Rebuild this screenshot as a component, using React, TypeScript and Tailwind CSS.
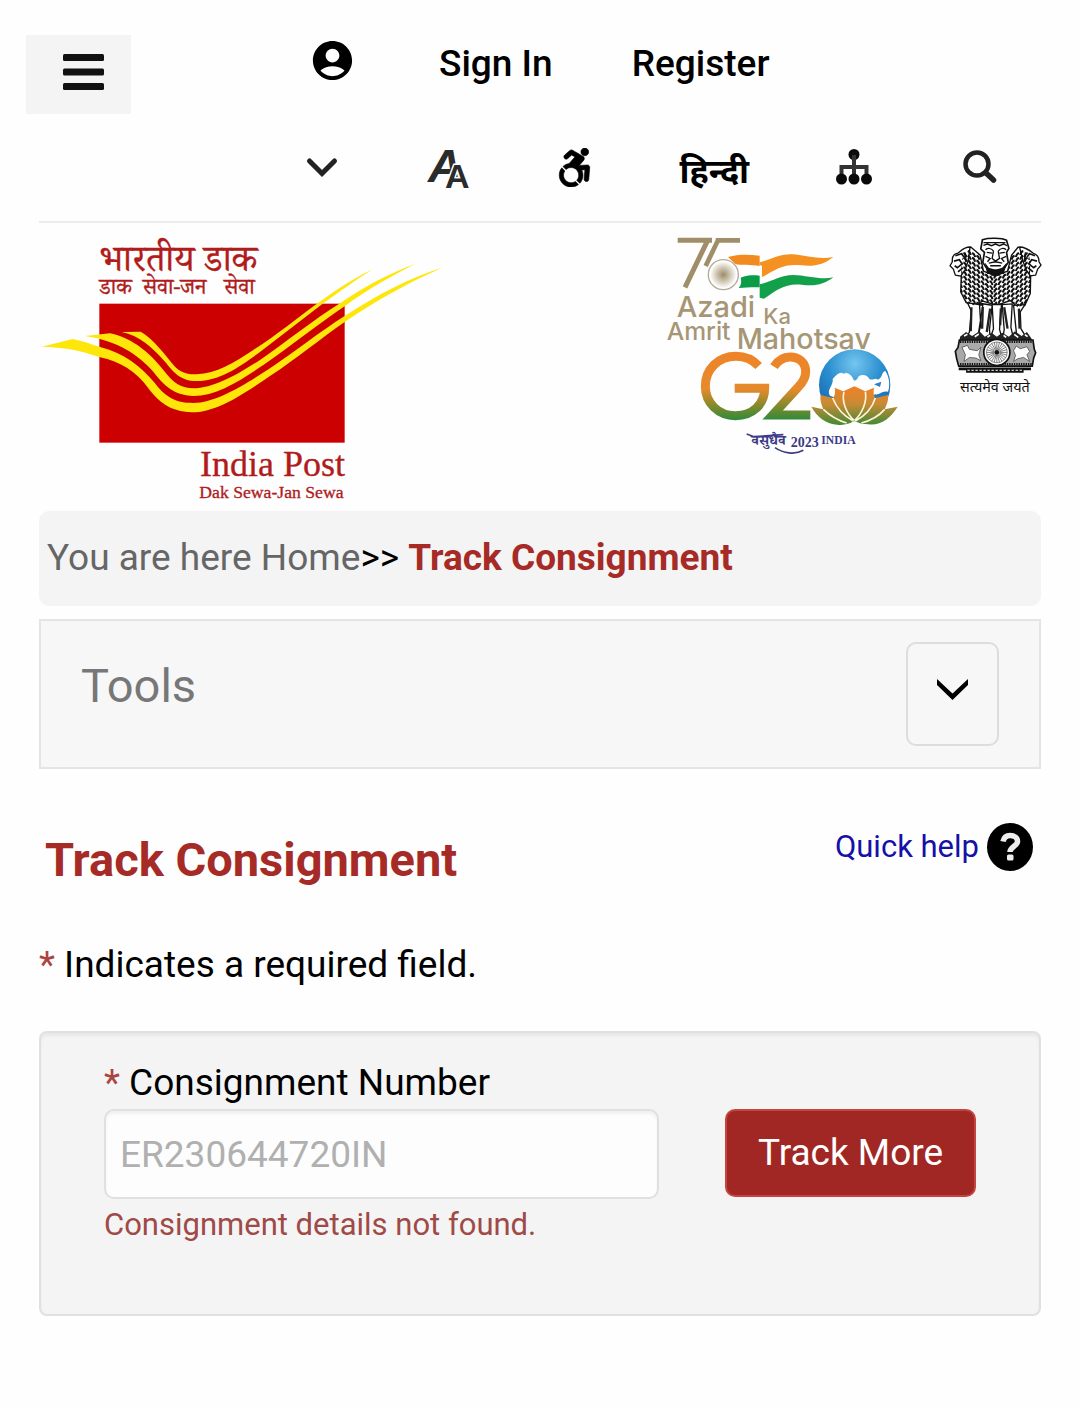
import React, { useState } from "react";
import { MdAccountCircle } from "react-icons/md";
import { FaAccessibleIcon } from "react-icons/fa6";

const HINDI_SERIF = "'Noto Serif Devanagari', 'Noto Sans Devanagari', 'Liberation Serif', serif";

function MenuIcon() {
  return (
    <svg viewBox="0 0 41 36" className="h-9 w-[41px]" fill="#111" aria-hidden="true">
      <rect x="0" y="0" width="41" height="7" rx="1.5" />
      <rect x="0" y="14.5" width="41" height="7" rx="1.5" />
      <rect x="0" y="29" width="41" height="7" rx="1.5" />
    </svg>
  );
}

function ChevronIcon() {
  return (
    <svg viewBox="0 0 42 42" className="size-[42px]" fill="none" stroke="#222" strokeWidth="5" strokeLinecap="round" aria-hidden="true">
      <path d="M8.5 15 L21 27.5 L33.5 15" />
    </svg>
  );
}

function TextSizeIcon() {
  return (
    <svg viewBox="0 0 42 42" className="size-[42px] overflow-visible" fill="#2b2b2b" fontWeight="700" aria-hidden="true">
      <text x="1" y="36" fontSize="47" fontStyle="italic" fontFamily="'Liberation Sans Narrow', 'Liberation Sans', sans-serif">A</text>
      <text x="18" y="42" fontSize="34" fontFamily="'Liberation Sans', sans-serif" stroke="#fefefe" strokeWidth="3" paintOrder="stroke">A</text>
    </svg>
  );
}

function SitemapIcon() {
  return (
    <svg viewBox="0 0 42 42" className="size-[42px]" fill="#0a0a0a" aria-hidden="true">
      <circle cx="21" cy="8.5" r="5.5" />
      <path d="M8.5 33V21H33.5V33M21 9V33" fill="none" stroke="#333" strokeWidth="4" />
      <circle cx="8.5" cy="33" r="5.5" />
      <circle cx="21" cy="33" r="5.5" />
      <circle cx="33.5" cy="33" r="5.5" />
    </svg>
  );
}

function SearchIcon() {
  return (
    <svg viewBox="0 0 42 42" className="size-[42px]" fill="none" stroke="#222" aria-hidden="true">
      <circle cx="18" cy="18" r="11.5" strokeWidth="4.5" />
      <path d="M27 27 L34.500 34" strokeWidth="5.500" strokeLinecap="round" />
    </svg>
  );
}

function IndiaPostLogo() {
  return (
    <svg viewBox="27 45 1212 789" className="h-auto w-[404px] overflow-visible" role="img" aria-label="India Post">
      <g fill="#b01c1c" fontFamily={HINDI_SERIF}>
        <text x="208" y="153" fontSize="109" stroke="#b01c1c" strokeWidth="1">भारतीय डाक</text>
        <g fontSize="66" stroke="#b01c1c" strokeWidth="1">
          <text x="208" y="222">डाक</text>
          <text x="338" y="222">सेवा-जन</text>
          <text x="582" y="222">सेवा</text>
        </g>
      </g>
      <rect x="208" y="251" width="736" height="417" fill="#cc0000" />
      <g fill="#ffe60a">
        <path d="M35 380 L128 357 C160 364 185 373 210 381 C280 398 335 440 375 490 C410 535 440 549 490 549 C560 549 650 490 720 445 C800 390 870 335 945 287 C1040 225 1140 172 1237 143 C1140 185 1040 240 945 305 C870 357 800 415 720 468 C640 522 560 577 485 577 C420 575 385 545 355 505 C320 455 270 424 210 412 C150 390 100 382 35 380Z" />
        <path d="M165 348 L240 340 C310 355 360 400 400 450 C430 490 455 505 490 505 C550 505 620 465 690 420 C770 365 850 300 930 250 C1010 195 1080 160 1155 132 C1080 170 1010 210 945 258 C860 315 780 380 700 435 C630 482 560 528 490 528 C430 525 400 495 370 455 C320 400 260 362 165 348Z" />
        <path d="M275 336 L332 335 C370 355 405 405 435 440 C455 460 475 463 500 463 C560 460 610 430 670 390 C740 345 800 295 865 248 C920 210 970 175 1028 148 C970 185 930 215 880 250 C815 300 750 350 685 400 C625 442 570 483 500 483 C450 483 430 455 405 425 C370 385 330 347 275 336Z" />
      </g>
      <g fill="#b01c1c" stroke="#b01c1c" strokeWidth="1" fontFamily="'Liberation Serif', serif">
        <text x="510" y="769" fontSize="108">India Post</text>
        <text x="508" y="833" fontSize="53">Dak Sewa-Jan Sewa</text>
      </g>
    </svg>
  );
}

function CampaignLogo() {
  return (
    <svg viewBox="51 36 693 657" className="h-auto w-[231px]" role="img" aria-label="Azadi Ka Amrit Mahotsav, G20 2023 India">
      <defs>
        <linearGradient id="g20" x1="0" y1="380" x2="0" y2="585" gradientUnits="userSpaceOnUse">
          <stop offset="0" stopColor="#ee8427" />
          <stop offset="0.55" stopColor="#e68a2c" />
          <stop offset="0.8" stopColor="#7f8a2c" />
          <stop offset="1" stopColor="#2f8a3c" />
        </linearGradient>
        <linearGradient id="lotus" x1="0" y1="485" x2="0" y2="600" gradientUnits="userSpaceOnUse">
          <stop offset="0" stopColor="#f08127" />
          <stop offset="0.45" stopColor="#c98a35" />
          <stop offset="1" stopColor="#3f8a35" />
        </linearGradient>
        <radialGradient id="globe" cx="0.5" cy="0.2" r="0.75">
          <stop offset="0" stopColor="#74c6ee" />
          <stop offset="0.5" stopColor="#2b8fd0" />
          <stop offset="1" stopColor="#1467ae" />
        </radialGradient>
        <radialGradient id="wheel">
          <stop offset="0" stopColor="#9d8b68" />
          <stop offset="0.55" stopColor="#d3cab8" />
          <stop offset="1" stopColor="#fff" />
        </radialGradient>
      </defs>

      <g fill="none" stroke="#a08d6a">
        <path d="M83 46H186M173 46L105 187" strokeWidth="15" />
        <path d="M270 46H197M204 46L167 123" strokeWidth="14" />
        <circle cx="220" cy="149" r="45" stroke="#b5aa98" strokeWidth="4" />
      </g>
      <circle cx="220" cy="149" r="40" fill="url(#wheel)" />
      <path d="M234 96C270 86 300 90 329 92V123C302 118 272 122 256 117Z" fill="#f28a20" />
      <path d="M329 112C368 102 390 85 430 88C470 92 510 105 550 96C522 118 492 126 455 121C405 115 380 130 336 157V123L329 119Z" fill="#f59120" />
      <path d="M272 158C292 150 310 150 329 152V187C304 186 285 189 266 189C274 179 275 170 272 158Z" fill="#0b9c48" />
      <path d="M329 178C368 169 390 151 430 150C470 151 515 166 550 157C522 178 495 185 455 179C405 174 380 195 342 221L329 218Z" fill="#13a04b" />

      <g fill="#a69676" fontFamily="Inter, sans-serif" fontWeight="500">
        <text x="80" y="276" fontSize="87">Azadi</text>
        <text x="340" y="298" fontSize="66">Ka</text>
        <text x="50" y="346" fontSize="74">Amrit</text>
        <text x="260" y="371" fontSize="86">Mahotsav</text>
      </g>

      <g fill="none" stroke="url(#g20)" strokeWidth="27">
        <path d="M326 423C302 398 280 394 258 394C206 394 166 432 166 484C166 535 206 572 256 572C308 572 344 538 344 490H254" />
        <path d="M372 425C386 403 402 396 420 396C448 396 467 414 467 440C467 460 457 474 443 488L368 570H481" />
      </g>

      <circle cx="614" cy="480" r="107" fill="url(#globe)" />
      <path d="M540 512C528 495 552 480 548 462C560 448 572 438 580 446C592 440 602 448 608 458C612 472 620 468 626 454C638 446 652 450 658 462C668 468 674 456 684 464C700 456 694 440 706 438C716 452 722 480 714 500C694 496 690 510 676 508L650 520H560Z" fill="#fff" />
      <path d="M672 478L694 470L690 486Z" fill="#2b7fc4" />
      <path d="M484 545L520 553C512 533 510 522 512 510L548 519C556 512 556 500 554 488L580 499L613 484L646 499L672 488C670 500 670 512 676 519L714 510C716 524 712 536 704 553L743 545C722 580 690 603 655 598C638 598 625 594 613 588C600 596 580 602 562 599C530 598 503 578 484 545Z" fill="url(#lotus)" />
      <path d="M520 553C540 572 560 585 590 594M704 553C686 574 664 586 634 594M548 519C558 545 580 572 610 588M676 519C668 545 646 572 616 588M582 500C574 530 590 566 612 586M646 500C652 530 636 566 614 586" fill="none" stroke="#fff3d8" strokeWidth="5" />

      <g fill="#3d3a86">
        <text x="304" y="660" fontSize="44" fontWeight="700" fontFamily={HINDI_SERIF}>वसुधैव</text>
        <path d="M290 627L312 635L400 629" fill="none" stroke="#3d3a86" strokeWidth="5" />
        <path d="M375 668C400 685 435 690 460 676" fill="none" stroke="#3d3a86" strokeWidth="5" />
        <text x="422" y="665" fontSize="42" fontWeight="700" fontFamily="'Liberation Serif', serif">2023</text>
        <text x="514" y="656" fontSize="35" fontWeight="700" fontFamily="'Liberation Serif', serif">INDIA</text>
      </g>
    </svg>
  );
}

function NationalEmblem() {
  const spokes = Array.from({ length: 24 }, (_, i) => {
    const a = (i * Math.PI) / 12;
    return `M${200 + 8 * Math.cos(a)} ${381 + 8 * Math.sin(a)}L${200 + 31 * Math.cos(a)} ${381 + 31 * Math.sin(a)}`;
  }).join("");
  const locks: string[] = [];
  for (let row = 0; row < 12; row++) {
    for (let col = 0; col < 17; col++) {
      const x = 92 + col * 13;
      const y = 78 + row * 14 + (col % 2) * 6;
      const side = x < 196 ? 1 : -1;
      locks.push(`M${x - 5 * side} ${y}q${7 * side} 2 ${9 * side} 12`);
    }
  }
  return (
    <svg viewBox="60 36 272 468" className="h-auto w-[91px] overflow-visible" role="img" aria-label="Satyameva Jayate">
      <defs>
        <clipPath id="manes">
          <path d="M98 72L128 68L152 95L160 138L196 152L232 138L242 95L262 68L292 72L300 110L300 205L284 240L262 246L240 226L200 240L158 228L132 240L108 232L92 200L94 130Z" />
        </clipPath>
      </defs>
      <g fill="#fff" stroke="#111" strokeWidth="4" strokeLinejoin="round">
        <path d="M98 74L122 66L150 90L160 138L196 152L232 138L244 90L264 66L292 74L302 110L300 205L284 240L262 246L240 226L200 240L158 228L132 240L108 232L92 200L94 140Z" />
        <path d="M120 66C102 66 94 76 84 84C68 86 66 98 67 110L60 122L70 132L76 150L92 153L105 135L114 108Z" />
        <path d="M268 66C286 66 298 76 308 84C322 88 326 98 326 110L332 120L322 132L316 150L300 152L288 135L278 108Z" />
        <path d="M112 232L124 258L118 320L108 340H142L146 318L158 240ZM148 234L152 300L142 338H180L178 312L186 240ZM186 238L190 310L180 340H216L208 312L214 238ZM216 238L222 312L218 340H250L242 306L246 236ZM250 240L258 318L260 340H290L272 310L270 260L284 238Z" />
      </g>
      <g clipPath="url(#manes)">
        <path d={locks.join("")} fill="none" stroke="#111" strokeWidth="6" />
      </g>
      <path d="M124 246L122 318M158 245L156 310M180 250L170 320M212 250L210 300M222 246L232 310M266 250L268 310" fill="none" stroke="#222" strokeWidth="7" />
      <path d="M157 44C175 38 215 38 229 46L236 70L229 82L234 112L218 136H174L158 112L163 82L152 72Z" fill="#fff" stroke="#111" strokeWidth="5" />
      <path d="M160 53H226M160 61L172 57L184 62L196 57L208 62L220 57L230 62M166 74C174 68 184 70 190 78M204 78C210 70 220 68 228 74M170 82L186 84M208 84L224 82M190 78L186 100L196 108L208 100L204 78M166 94L180 100L172 110M228 94L214 100L222 110M176 114L196 110L216 114M180 122H212" fill="none" stroke="#111" strokeWidth="4" />
      <path d="M164 112L176 128L196 134L216 128L230 112L222 142L196 154L170 142Z" fill="#111" />
      <path d="M76 92L94 86L102 96M72 108L88 104L96 116L82 128L74 122M84 140L98 128M314 92L298 86L290 96M320 108L304 104L296 116L310 128L318 122M308 140L294 128M104 82L108 110M286 82L282 110" fill="none" stroke="#111" strokeWidth="5" />
      <path d="M90 334L108 320L126 332L148 318L164 334L184 322L200 334L216 322L236 334L254 318L274 332L290 320L304 340V350H88Z" fill="#222" />
      <path d="M102 332L112 327M134 334L146 326M172 335L180 330M220 330L228 336M252 327L264 336M284 328L292 334" stroke="#fff" strokeWidth="5" />
      <path d="M88 344H308L312 372L316 382L310 398L306 422H86L80 400L76 378L84 366Z" fill="#a9a9a9" stroke="#111" strokeWidth="5" />
      <path d="M90 349H306M90 416H304" stroke="#111" strokeWidth="7" strokeDasharray="4 3" />
      <path d="M96 366L112 360L118 372L142 376L152 366L146 388L152 406L138 398L118 396L102 408L106 388ZM250 376L258 362L270 370L290 364L298 378L290 388L298 408L280 396L262 400L250 408L256 390Z" fill="#fff" stroke="#333" strokeWidth="2" />
      <circle cx="200" cy="381" r="39" fill="#fff" stroke="#111" strokeWidth="5" />
      <path d={spokes} stroke="#444" strokeWidth="2" />
      <circle cx="200" cy="381" r="31" fill="none" stroke="#555" strokeWidth="2" />
      <circle cx="200" cy="381" r="7" fill="#111" />
      <path d="M86 426H302V434H280V442H108V434H86Z" fill="#111" />
      <path d="M112 434H278" stroke="#fff" strokeWidth="3" strokeDasharray="7 5" />
      <text x="90" y="498" fontSize="43" fill="#111" fontFamily="'Noto Sans Devanagari', 'Noto Sans', sans-serif">सत्यमेव जयते</text>
    </svg>
  );
}

function HelpIcon() {
  return (
    <svg viewBox="0 0 46 48" className="h-12 w-[46px]" aria-hidden="true">
      <ellipse cx="23" cy="24" rx="23" ry="24" fill="#000" />
      <path d="M16 18.500C17 14 19.500 12.500 23 12.500C27.500 12.500 30.500 15 30.500 18.500C30.500 23 23 23.500 23 29" fill="none" stroke="#eee" strokeWidth="5.500" />
      <rect x="20" y="31.500" width="6.500" height="6" rx="1.500" fill="#eee" />
    </svg>
  );
}

export default function App() {
  const [number, setNumber] = useState("");
  return (
    <div className="min-h-screen bg-[#fefefe] font-['Roboto','Noto_Sans_Devanagari',sans-serif] text-[37px] leading-[42px] text-black">
      <header>
        <div className="flex items-start px-[26px] pt-[35px]">
          <button type="button" aria-label="Menu" className="flex h-[79px] w-[105px] items-center justify-center bg-[#f4f4f4] pb-1.5 pl-2.5">
            <MenuIcon />
          </button>
          <nav aria-label="Account" className="ml-[178px] flex items-center gap-[79px] pt-0.5 font-medium">
            <a href="#account" aria-label="Account" className="flex w-[51px] pb-1.5">
              <MdAccountCircle className="size-[47px]" />
            </a>
            <a href="#signin">Sign In</a>
            <a href="#register">Register</a>
          </nav>
        </div>
        <div className="mx-[39px] flex items-center justify-end gap-[84px] border-b-2 border-[#ececec] pt-8 pr-10 pb-[33px]">
          <button type="button" aria-label="More options"><ChevronIcon /></button>
          <button type="button" aria-label="Text size"><TextSizeIcon /></button>
          <button type="button" aria-label="Accessibility" className="flex size-[42px] items-center justify-center">
            <FaAccessibleIcon className="size-[39px]" stroke="currentColor" strokeWidth="8" />
          </button>
          <a href="#hindi" lang="hi" className="pt-2 text-[34px] leading-[34px] font-bold">हिन्दी</a>
          <a href="#sitemap" aria-label="Site map"><SitemapIcon /></a>
          <button type="button" aria-label="Search"><SearchIcon /></button>
        </div>
      </header>

      <main className="px-[39px]">
        <div className="flex items-start pt-3">
          <IndiaPostLogo />
          <div className="ml-auto flex items-start gap-[52px] pt-0.5">
            <CampaignLogo />
            <NationalEmblem />
          </div>
        </div>

        <nav aria-label="Breadcrumb" className="mt-[13px] rounded-[10px] bg-[#f4f4f4] px-2 pt-[26px] pb-[27px]">
          <a href="#home" className="text-[#666]">You are here Home</a>&gt;&gt;{" "}
          <strong className="font-bold text-[#a62b26]">Track Consignment</strong>
        </nav>

        <section className="mt-[13px] flex h-[150px] items-center justify-between border-2 border-[#e4e4e4] bg-[#f7f7f7] px-10">
          <h2 className="pb-4 text-[47px] text-[#777]">Tools</h2>
          <button type="button" aria-label="Show tools" className="flex h-[104px] w-[93px] items-center justify-center rounded-[10px] border-2 border-[#ddd] pb-2.5">
            <svg viewBox="0 0 31 21" className="h-[21px] w-[31px]" aria-hidden="true">
              <path d="M0 0L15.500 14.500L31 0V6L15.500 21L0 6Z" />
            </svg>
          </button>
        </section>

        <div className="mt-[54px] flex items-start justify-between pr-2 pl-1.5">
          <h1 className="pt-2.5 text-[47px] leading-[54px] font-bold text-[#a62b26]">Track Consignment</h1>
          <a href="#help" className="flex items-center gap-2 text-[31px] text-[#1510a8]">
            Quick help
            <HelpIcon />
          </a>
        </div>

        <p className="mt-[57px]">
          <span className="text-[#a94442]">*</span> Indicates a required field.
        </p>

        <form onSubmit={(e) => e.preventDefault()} className="mt-[45px] rounded-lg border-2 border-[#e0e0e0] bg-[#f4f4f4] px-[63px] pt-7 pb-[69px] shadow-[inset_0_3px_3px_rgba(0,0,0,0.05)]">
          <label htmlFor="consignment" className="mb-1 block leading-[44px]">
            <span className="text-[#a94442]">*</span> Consignment Number
          </label>
          <div className="flex items-start gap-[66px]">
            <input
              id="consignment"
              type="text"
              value={number}
              onChange={(e) => setNumber(e.target.value)}
              placeholder="ER230644720IN"
              className="h-[90px] min-w-0 flex-1 rounded-[10px] border-2 border-[#e0e0e0] bg-[#fdfdfd] px-3.5 shadow-[inset_0_3px_3px_rgba(0,0,0,0.05)] placeholder:text-[#b0b0b0]"
            />
            <button type="submit" className="h-22 w-[251px] rounded-[10px] border-2 border-[#c4453f] bg-[#a12724] text-white">
              Track More
            </button>
          </div>
          <p className="mt-1.5 text-[31px] leading-10 text-[#a04a48]">Consignment details not found.</p>
        </form>
      </main>
    </div>
  );
}
